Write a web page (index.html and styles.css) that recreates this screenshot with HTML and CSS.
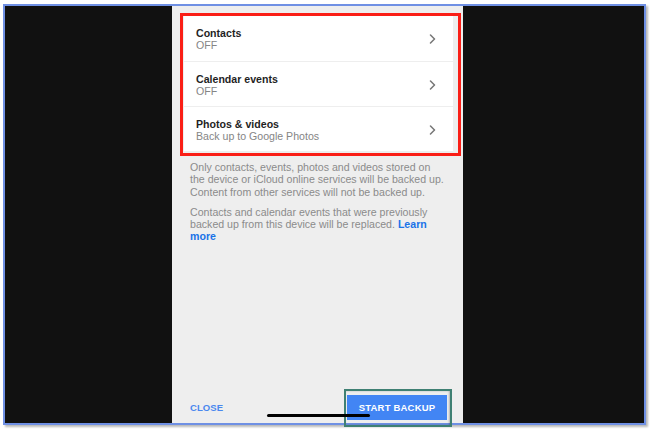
FILE: index.html
```html
<!DOCTYPE html>
<html>
<head>
<meta charset="utf-8">
<link rel="stylesheet" href="styles.css">
</head>
<body>
<div class="frame">
  <div class="phone">
    <div class="highlight">
      <div class="card">
        <div class="row">
          <div class="texts">
            <div class="title">Contacts</div>
            <div class="sub">OFF</div>
          </div>
          <svg class="chev" width="7" height="10" viewBox="0 0 7 10"><polyline points="1.5,1 5.5,5 1.5,9" fill="none" stroke="#757575" stroke-width="1.5" stroke-linecap="round" stroke-linejoin="round"/></svg>
        </div>
        <div class="row">
          <div class="texts">
            <div class="title">Calendar events</div>
            <div class="sub">OFF</div>
          </div>
          <svg class="chev" width="7" height="10" viewBox="0 0 7 10"><polyline points="1.5,1 5.5,5 1.5,9" fill="none" stroke="#757575" stroke-width="1.5" stroke-linecap="round" stroke-linejoin="round"/></svg>
        </div>
        <div class="row">
          <div class="texts">
            <div class="title">Photos &amp; videos</div>
            <div class="sub">Back up to Google Photos</div>
          </div>
          <svg class="chev" width="7" height="10" viewBox="0 0 7 10"><polyline points="1.5,1 5.5,5 1.5,9" fill="none" stroke="#757575" stroke-width="1.5" stroke-linecap="round" stroke-linejoin="round"/></svg>
        </div>
      </div>
    </div>
    <p class="note">Only contacts, events, photos and videos stored on the device or iCloud online services will be backed up. Content from other services will not be backed up.</p>
    <p class="note second">Contacts and calendar events that were previously backed up from this device will be replaced. <span class="link">Learn more</span></p>
    <div class="spacer"></div>
    <div class="actions">
      <span class="close">CLOSE</span>
      <div class="btn-wrap">
        <div class="btn">START BACKUP</div>
        <div class="btn-mark"></div>
      </div>
    </div>
    <div class="home"></div>
  </div>
</div>
</body>
</html>
```
FILE: styles.css
```css
html, body {
  margin: 0;
  padding: 0;
  background: #ffffff;
}
body {
  width: 650px;
  height: 429px;
  padding: 4px 0 0 3px;
  box-sizing: border-box;
  font-family: "Liberation Sans", Arial, sans-serif;
}
.frame {
  width: 643px;
  height: 421px;
  box-sizing: border-box;
  border: 2px solid #6f90e4;
  background: #111111;
  box-shadow: 2px 2px 2px rgba(0, 0, 0, 0.28);
  display: flex;
}
.phone {
  position: relative;
  margin-left: 167px;
  width: 291px;
  height: 100%;
  background: #eeeeee;
  display: flex;
  flex-direction: column;
}
.highlight {
  margin: 7px 2px 0 8px;
  border: 3px solid #fa1e16;
  padding: 0 5px 2px 1px;
}
.card {
  background: #ffffff;
  display: flex;
  flex-direction: column;
}
.row {
  height: 45px;
  box-sizing: border-box;
  padding: 11px 17px 0 12px;
  display: flex;
  align-items: flex-start;
  justify-content: space-between;
  border-top: 1px solid #eeeeee;
}
.row:first-child {
  border-top: none;
}
.title {
  font-size: 10.6px;
  line-height: 12px;
  font-weight: bold;
  color: #1f1f1f;
}
.sub {
  font-size: 10.6px;
  line-height: 12px;
  color: #858585;
}
.chev {
  margin-top: 7px;
}
.note {
  margin: 5px 0 0 18px;
  width: 255px;
  font-size: 10.6px;
  line-height: 12.3px;
  color: #8b8b8b;
}
.note.second {
  margin-top: 8px;
}
.link {
  color: #1a73e8;
  font-weight: bold;
}
.spacer {
  flex: 1;
}
.actions {
  display: flex;
  align-items: center;
  justify-content: space-between;
  padding: 0 16px 3px 18px;
}
.close {
  font-size: 9.5px;
  font-weight: bold;
  color: #4a88ee;
  letter-spacing: 0.1px;
}
.btn-wrap {
  position: relative;
}
.btn {
  width: 100px;
  height: 25px;
  background: #4285f4;
  color: #ffffff;
  font-size: 9.5px;
  font-weight: bold;
  letter-spacing: 0.2px;
  display: flex;
  align-items: center;
  justify-content: center;
}
.btn-mark {
  position: absolute;
  left: -3px;
  right: -5px;
  top: -6px;
  bottom: -7px;
  border: 2px solid #3f8073;
  box-shadow: inset -1px 0 2px rgba(0, 0, 0, 0.25);
}
.home {
  position: absolute;
  left: 95px;
  bottom: 6px;
  width: 103px;
  height: 3px;
  border-radius: 2px;
  background: #000000;
}
```
